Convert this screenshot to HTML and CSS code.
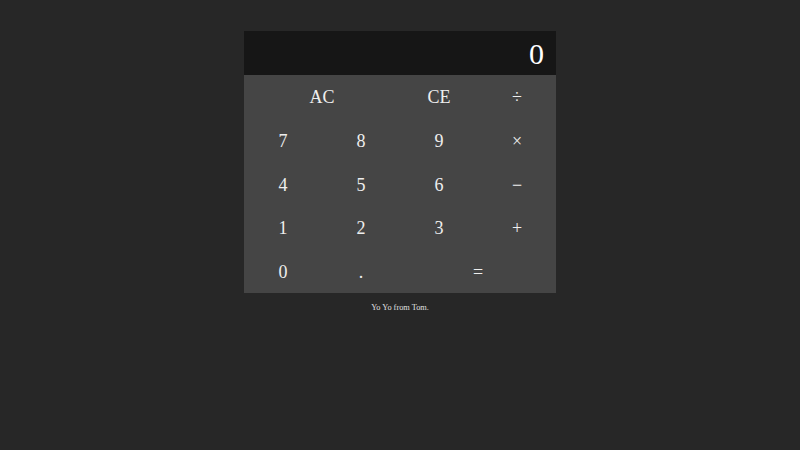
FILE: index.html
```html
<!DOCTYPE html>
<html lang="en">
<head>
  <meta charset="UTF-8">
  <title>Calculator</title>
  <link rel="stylesheet" href="styles.css">
</head>
<body>
  <div class="calculator">
    <div class="display" id="display">0</div>
    <div class="keys">
      <button class="key wide">AC</button>
      <button class="key">CE</button>
      <button class="key">&divide;</button>
      <button class="key">7</button>
      <button class="key">8</button>
      <button class="key">9</button>
      <button class="key">&times;</button>
      <button class="key">4</button>
      <button class="key">5</button>
      <button class="key">6</button>
      <button class="key">&minus;</button>
      <button class="key">1</button>
      <button class="key">2</button>
      <button class="key">3</button>
      <button class="key">+</button>
      <button class="key">0</button>
      <button class="key">.</button>
      <button class="key wide">=</button>
    </div>
  </div>
  <p class="credit">Yo Yo from Tom.</p>
</body>
</html>
```

FILE: styles.css
```css
* {
  box-sizing: border-box;
}
body {
  margin: 0;
  padding-top: 31px;
  background-color: #272727;
  font-family: "Liberation Serif", "Times New Roman", serif;
  color: #eee;
}
.calculator {
  width: 312px;
  margin: 0 auto;
}
.display {
  height: 44px;
  background-color: #161616;
  color: #fff;
  font-size: 30px;
  line-height: 46px;
  text-align: right;
  padding-right: 12px;
}
.keys {
  display: grid;
  grid-template-columns: repeat(4, 1fr);
  grid-auto-rows: 43.7px;
  background-color: #454545;
}
.key {
  background: none;
  border: none;
  color: #eee;
  font-family: inherit;
  font-size: 18px;
  padding: 2px 0 0;
  cursor: pointer;
}
.key.wide {
  grid-column: span 2;
}
.credit {
  margin: 10px 0 0;
  text-align: center;
  font-size: 8.3px;
  color: #e0e0e0;
}
```
